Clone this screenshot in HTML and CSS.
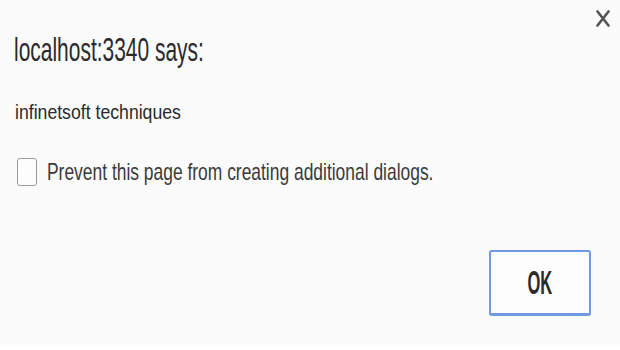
FILE: index.html
```html
<!DOCTYPE html>
<html>
<head>
<meta charset="utf-8">
<link rel="stylesheet" href="styles.css">
</head>
<body>
<div class="dialog">
  <div class="header">
    <div class="title"><span class="squeeze title-text">localhost:3340 says:</span></div>
    <div class="close">
      <svg width="14" height="17" viewBox="0 0 14 17"><path d="M1.5 1.5 L12.5 15.5 M12.5 1.5 L1.5 15.5" stroke="#555" stroke-width="2.6" fill="none" stroke-linecap="round"/></svg>
    </div>
  </div>
  <div class="msg"><span class="squeeze msg-text">infinetsoft techniques</span></div>
  <div class="check-row">
    <span class="box"></span>
    <span class="squeeze label-text">Prevent this page from creating additional dialogs.</span>
  </div>
  <div class="actions">
    <div class="ok"><span class="squeeze ok-text">OK</span></div>
  </div>
</div>
</body>
</html>
```
FILE: styles.css
```css
html, body {
  margin: 0;
  padding: 0;
  background: #ffffff;
}
.dialog {
  width: 620px;
  height: 345px;
  box-sizing: border-box;
  background: #fbfbfb;
  font-family: "Liberation Sans", Arial, sans-serif;
  color: #222;
  display: flex;
  flex-direction: column;
  padding: 0 29px 0 14px;
}
.header {
  display: flex;
  justify-content: space-between;
  align-items: flex-start;
}
.title {
  margin-top: 30px;
  font-size: 33px;
  line-height: 40px;
  height: 40px;
  white-space: nowrap;
  color: #2a2a2a;
}
.squeeze {
  display: inline-block;
  transform-origin: 0 50%;
  white-space: nowrap;
}
.title-text { transform: scaleX(0.635); }
.close {
  margin-top: 10px;
  margin-right: -19px;
  width: 14px;
  height: 17px;
}
.close svg { display: block; }
.msg {
  margin-top: 30px;
  margin-left: 1px;
  font-size: 20px;
  line-height: 24px;
  height: 24px;
  color: #2a2a2a;
}
.msg-text { transform: scaleX(0.883); }
.check-row {
  margin-top: 34px;
  display: flex;
  align-items: center;
  height: 28px;
  padding-left: 3px;
}
.box {
  width: 20px;
  height: 28px;
  box-sizing: border-box;
  border: 1.5px solid #9c9c9c;
  border-radius: 3px;
  background: #fdfdfd;
  flex: none;
}
.label-text {
  margin-left: 10px;
  font-size: 24px;
  line-height: 28px;
  color: #3a3a3a;
  transform: scaleX(0.726);
}
.actions {
  margin-top: 64px;
  display: flex;
  justify-content: flex-end;
}
.ok {
  width: 102px;
  height: 66px;
  box-sizing: border-box;
  border: 2px solid #6f98e0;
  border-bottom-width: 3px;
  border-radius: 3px;
  background: #fdfdfd;
  display: flex;
  align-items: center;
  justify-content: center;
}
.ok-text {
  font-size: 33px;
  line-height: 36px;
  font-weight: bold;
  color: #2b2b2b;
  transform-origin: 50% 50%;
  transform: scaleX(0.5);
}
```
